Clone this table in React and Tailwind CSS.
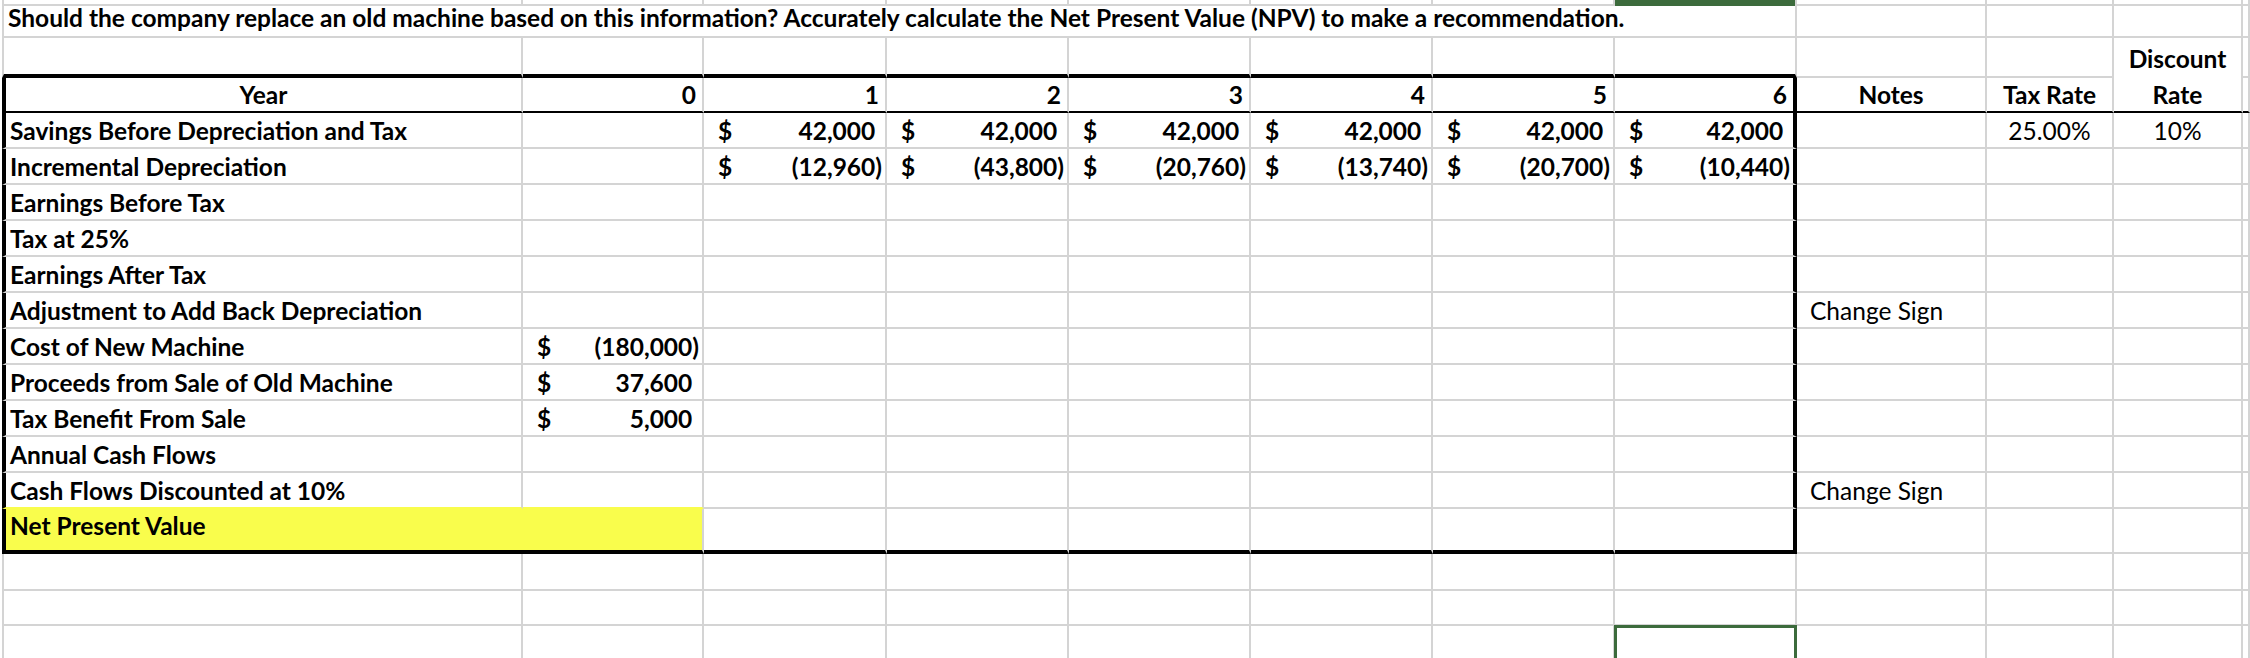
import clsx from 'clsx';

// spreadsheet: NPV worksheet for replacing an old machine
const L = {
  g: 'border-l-2 border-l-[#d4d4d4]',
  k: 'border-l-4 border-l-black',
  n: 'border-l-0',
};
const R = {
  g: 'border-r-2 border-r-[#d4d4d4]',
  k: 'border-r-4 border-r-black',
};
const B = {
  g: 'border-b-2 border-b-[#d4d4d4]',
  k2: 'border-b-2 border-b-black',
  k4: 'border-b-4 border-b-black',
  y: 'border-b-2 border-b-[#f9fd4c]',
  green: 'border-b-2 border-b-[#3c6b3c]',
};
const ALIGN = {
  left: 'justify-start pl-[4px]',
  note: 'justify-start pl-[13px]',
  center: 'justify-center',
  right: 'justify-end pr-[6px]',
};

const TITLE =
  'Should the company replace an old machine based on this information? Accurately calculate the Net Present Value (NPV) to make a recommendation.';

const LABELS = [
  'Savings Before Depreciation and Tax',
  'Incremental Depreciation',
  'Earnings Before Tax',
  'Tax at 25%',
  'Earnings After Tax',
  'Adjustment to Add Back Depreciation',
  'Cost of New Machine',
  'Proceeds from Sale of Old Machine',
  'Tax Benefit From Sale',
  'Annual Cash Flows',
  'Cash Flows Discounted at 10%',
];

const SAVINGS = ['42,000', '42,000', '42,000', '42,000', '42,000', '42,000'];
const DEPR = ['(12,960)', '(43,800)', '(20,760)', '(13,740)', '(20,700)', '(10,440)'];
const YEAR0 = { 6: '(180,000)', 7: '37,600', 8: '5,000' };
const NOTES = { 5: 'Change Sign', 10: 'Change Sign' };

function Cell({ l, r = 'g', b = 'g', span, align = 'left', bg, bold = true, className, children }) {
  return (
    <div
      className={clsx(
        'flex min-w-0 items-end whitespace-nowrap pb-[4px] leading-none',
        l && L[l],
        R[r],
        B[b],
        span,
        ALIGN[align],
        bg,
        bold ? 'font-bold' : 'font-normal',
        className,
      )}
    >
      {children}
    </div>
  );
}

function Money({ value }) {
  const neg = value.startsWith('(');
  return (
    <div className="flex w-full justify-between pl-[10px]">
      <span>$</span>
      <span>
        {value}
        {!neg && <span className="invisible">)</span>}
      </span>
    </div>
  );
}

export default function App() {
  const cells = [];
  const push = (key, props, content) =>
    cells.push(
      <Cell key={key} {...props}>
        {content}
      </Cell>,
    );

  // column header strip (H is the active column)
  for (let c = 0; c < 12; c++) {
    push(`s${c}`, {
      l: c === 0 ? 'g' : undefined,
      b: c === 7 ? 'green' : 'g',
      bg: c === 7 ? 'bg-[#3c6b3c]' : undefined,
      className: 'pb-0',
    });
  }

  // title row, text spills over A:H
  push('t', { l: 'g', span: 'col-span-8' }, <span className="pb-[2px]">{TITLE}</span>);
  for (let c = 8; c < 12; c++) push(`t${c}`, {});

  // blank row above the table; K2:K3 holds "Discount Rate"
  for (let c = 0; c < 10; c++) push(`b${c}`, { l: c === 0 ? 'g' : undefined, b: c < 8 ? 'k4' : 'g' });
  push(
    'disc',
    { span: 'row-span-2', b: 'k2', align: 'center' },
    <div className="flex flex-col items-center gap-[11px]">
      <span>Discount</span>
      <span>Rate</span>
    </div>,
  );
  push('b11', {});

  // header row
  push('hy', { l: 'k', b: 'k2', align: 'center' }, 'Year');
  ['0', '1', '2', '3', '4', '5', '6'].forEach((y, i) =>
    push(`h${y}`, { b: 'k2', r: i === 6 ? 'k' : 'g', align: 'right' }, y),
  );
  push('hn', { b: 'k2', align: 'center' }, 'Notes');
  push('ht', { b: 'k2', align: 'center' }, 'Tax Rate');
  push('hl', { b: 'k2' });

  // data rows
  LABELS.forEach((label, i) => {
    const lastBeforeNpv = i === LABELS.length - 1;
    push(`l${i}`, { l: 'k', b: lastBeforeNpv ? 'y' : 'g' }, label);
    push(
      `z${i}`,
      { b: lastBeforeNpv ? 'y' : 'g', className: 'pr-[3px]' },
      YEAR0[i] ? <Money value={YEAR0[i]} /> : null,
    );
    for (let c = 0; c < 6; c++) {
      const v = i === 0 ? SAVINGS[c] : i === 1 ? DEPR[c] : null;
      push(
        `d${i}-${c}`,
        { r: c === 5 ? 'k' : 'g', className: 'pr-[3px]' },
        v ? <Money value={v} /> : null,
      );
    }
    push(`n${i}`, { align: 'note', bold: false }, NOTES[i]);
    push(`tr${i}`, { align: 'center', bold: false }, i === 0 ? '25.00%' : null);
    push(`dr${i}`, { align: 'center', bold: false }, i === 0 ? '10%' : null);
    push(`x${i}`, {});
  });

  // NPV row
  push('npv', { l: 'k', b: 'k4', span: 'col-span-2', bg: 'bg-[#f9fd4c]', className: 'pb-[12px]' }, 'Net Present Value');
  for (let c = 0; c < 6; c++) push(`npv${c}`, { b: 'k4', r: c === 5 ? 'k' : 'g' });
  for (let c = 0; c < 4; c++) push(`npvx${c}`, {});

  // empty rows below
  for (let rr = 0; rr < 3; rr++) {
    for (let c = 0; c < 12; c++) {
      const active = rr === 2 && c === 7;
      cells.push(
        <div
          key={`e${rr}-${c}`}
          className={clsx('relative', c === 0 && L.g, R.g, B.g)}
        >
          {active && (
            <div className="absolute -top-[1px] -left-[1px] -right-[2px] -bottom-[10px] border-[3px] border-[#3c6b3c]" />
          )}
        </div>,
      );
    }
  }

  return (
    <div className="h-[658px] w-[2250px] overflow-hidden bg-white pl-[2px] font-['Lato','Noto_Sans',sans-serif] text-[24.5px] text-black">
      <div className="grid grid-cols-[521px_181px_183px_182px_182px_182px_182px_182px_190px_127px_129px_1fr] grid-rows-[4px_34px_40px_35px_repeat(11,36px)_45px_37px_35px_40px]">
        {cells}
      </div>
    </div>
  );
}
